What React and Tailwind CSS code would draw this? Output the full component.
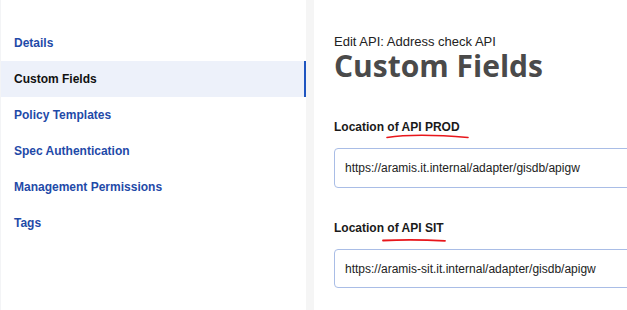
import React from "react";

const items = [
  "Details",
  "Custom Fields",
  "Policy Templates",
  "Spec Authentication",
  "Management Permissions",
  "Tags",
];

export default function App() {
  return (
    <div className="flex h-[310px] w-[627px] overflow-hidden bg-white" style={{ fontFamily: '"Liberation Sans", Arial, sans-serif' }}>
      <aside className="w-[306px] shrink-0 border-l border-[#f3f4f6] bg-white pt-[25px]">
        {items.map((it) =>
          it === "Custom Fields" ? (
            <div key={it} className="flex h-[36px] items-center border-r-2 border-[#1f55c0] bg-[#edf1fa] pl-[13px] text-[12px] font-bold text-[#111]">
              {it}
            </div>
          ) : (
            <div key={it} className="flex h-[36px] items-center pl-[13px] text-[12px] font-bold text-[#1f4aa8]">
              {it}
            </div>
          )
        )}
      </aside>
      <div className="w-[8px] shrink-0 bg-[#f5f5f5]" />
      <main className="flex-1 overflow-hidden pl-[20px] pt-[35px]">
        <div className="text-[13px] leading-[14px] text-[#222]">Edit API: Address check API</div>
        <h1 className="text-[30px] font-bold leading-[33px] text-[#4a4a4a]" style={{ fontFamily: '"Open Sans", sans-serif' }}>
          Custom Fields
        </h1>
        <div className="relative mt-[38px] text-[12px] font-bold leading-[14px] text-[#1a1a1a]">
          Location of API PROD
          <svg className="absolute left-[52px] top-[12px]" width="84" height="8" viewBox="0 0 84 8">
            <path d="M1 5.5 Q 30 1 82 5.5" fill="none" stroke="#e8161b" strokeWidth="1.6" strokeLinecap="round" />
          </svg>
        </div>
        <div className="mt-[14px] flex h-[40px] w-[420px] items-center rounded-[4px] border border-[#a9bde6] pl-[10px] text-[12px] text-[#222]">
          https://aramis.it.internal/adapter/gisdb/apigw
        </div>
        <div className="relative mt-[33px] text-[12px] font-bold leading-[14px] text-[#1a1a1a]">
          Location of API SIT
          <svg className="absolute left-[48px] top-[16px]" width="66" height="6" viewBox="0 0 66 6">
            <path d="M1 3.5 Q 30 2 63 3.8" fill="none" stroke="#e8161b" strokeWidth="1.8" strokeLinecap="round" />
          </svg>
        </div>
        <div className="mt-[14px] flex h-[39px] w-[420px] items-center rounded-[4px] border border-[#a9bde6] pl-[10px] text-[12px] text-[#222]">
          https://aramis-sit.it.internal/adapter/gisdb/apigw
        </div>
      </main>
    </div>
  );
}
